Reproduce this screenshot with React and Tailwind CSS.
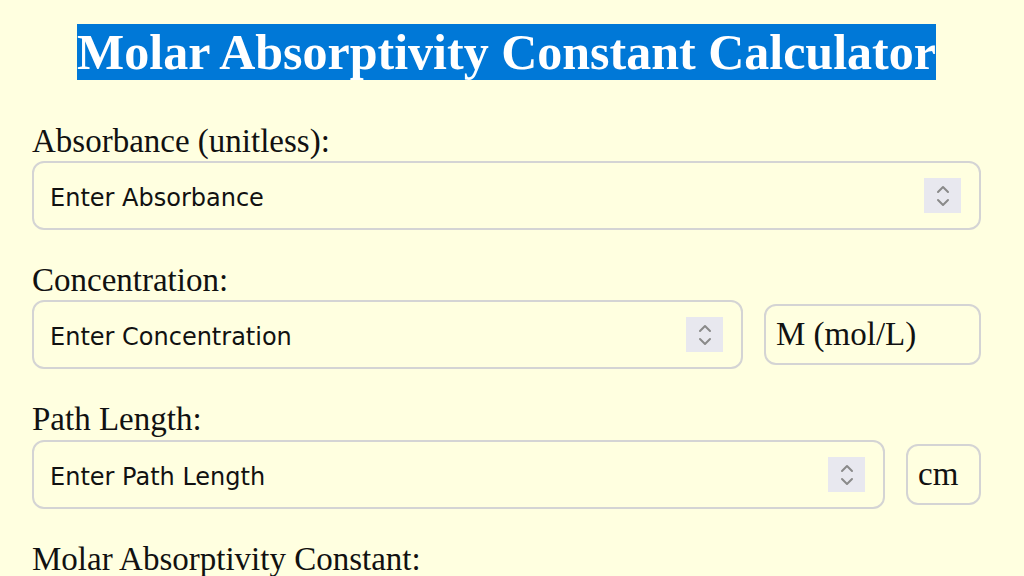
import React from 'react';

const serif = { fontFamily: '"Liberation Serif", "Times New Roman", serif' };

const Spinner = () => (
  <div className="flex h-[35px] w-[37px] shrink-0 items-center justify-center bg-[#e8e8ef]">
    <svg width="16" height="26" viewBox="0 0 16 26" fill="none" stroke="#8a8a8a" strokeWidth="2" strokeLinecap="round" strokeLinejoin="round">
      <path d="M3 9 L8 4 L13 9" />
      <path d="M3 17 L8 22 L13 17" />
    </svg>
  </div>
);

const NumberField = ({ placeholder, className }) => (
  <div className={`flex h-[69px] items-center rounded-[12px] border-2 border-[#d4d4d4] pl-[16px] pr-[18px] ${className}`}>
    <input
      type="text"
      placeholder={placeholder}
      className="min-w-0 flex-1 bg-transparent pt-[4px] text-[24px] text-[#111] outline-none placeholder:text-[#111]"
      style={{ fontFamily: 'Tahoma, "DejaVu Sans", Verdana, sans-serif' }}
    />
    <Spinner />
  </div>
);

const Unit = ({ children, className }) => (
  <div
    className={`flex h-[61px] shrink-0 items-center rounded-[12px] border-2 border-[#d4d4d4] px-[10px] text-[33px] text-[#111] ${className}`}
    style={serif}
  >
    {children}
  </div>
);

const Label = ({ children }) => (
  <div className="text-[33px] leading-[38px] text-[#111]" style={serif}>
    {children}
  </div>
);

export default function App() {
  return (
    <div className="min-h-[576px] w-[1024px] overflow-hidden bg-[#ffffe0] pl-[32px] pr-[43px] pt-[25px]">
      <h1 className="h-[54px] text-center text-[50px] font-bold leading-[54px]" style={serif}>
        <span className="bg-[#0078d7] text-white">Molar Absorptivity Constant Calculator</span>
      </h1>

      <div className="mt-[43px]">
        <Label>Absorbance (unitless):</Label>
        <NumberField placeholder="Enter Absorbance" className="mt-[1px] w-full" />
      </div>

      <div className="mt-[31px]">
        <Label>Concentration:</Label>
        <div className="mt-[1px] flex items-center gap-[21px]">
          <NumberField placeholder="Enter Concentration" className="flex-1" />
          <Unit className="w-[217px]">M (mol/L)</Unit>
        </div>
      </div>

      <div className="mt-[31px]">
        <Label>Path Length:</Label>
        <div className="mt-[2px] flex items-center gap-[21px]">
          <NumberField placeholder="Enter Path Length" className="flex-1" />
          <Unit className="w-[75px]">cm</Unit>
        </div>
      </div>

      <div className="mt-[31px]">
        <Label>Molar Absorptivity Constant:</Label>
      </div>
    </div>
  );
}
